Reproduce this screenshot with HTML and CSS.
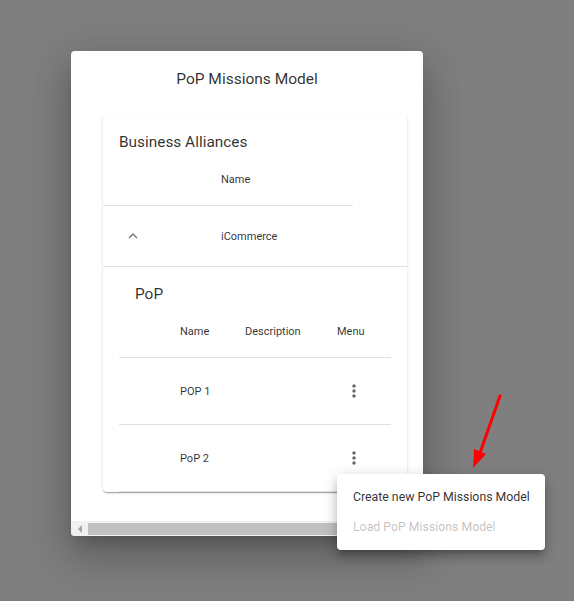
FILE: index.html
```html
<!DOCTYPE html>
<html>
<head>
<meta charset="utf-8">
<link rel="stylesheet" href="styles.css">
</head>
<body>
<div class="dialog">
  <h2 class="dialog-title">PoP Missions Model</h2>
  <div class="dialog-content">
    <div class="card">
      <div class="card-title">Business Alliances</div>
      <div class="outer-head">
        <div class="c-icon"></div>
        <div class="c-name">Name</div>
      </div>
      <div class="outer-row">
        <div class="c-icon">
          <svg class="chev" viewBox="0 0 24 24" width="18" height="18"><path d="M7.41 15.41 12 10.830l4.59 4.58L18 14l-6-6-6 6z"/></svg>
        </div>
        <div class="c-name">iCommerce</div>
      </div>
      <div class="detail">
        <div class="sub-title">PoP</div>
        <div class="sub-row sub-head">
          <div></div><div class="cell">Name</div><div class="cell">Description</div><div class="cell">Menu</div>
        </div>
        <div class="sub-row">
          <div></div><div class="cell">POP 1</div><div class="cell"></div>
          <div class="cell kebab"><svg viewBox="0 0 24 24" width="20" height="20"><path d="M12 8c1.1 0 2-.9 2-2s-.9-2-2-2-2 .9-2 2 .9 2 2 2zm0 2c-1.1 0-2 .9-2 2s.9 2 2 2 2-.9 2-2-.9-2-2-2zm0 6c-1.1 0-2 .9-2 2s.9 2 2 2 2-.9 2-2-.9-2-2-2z"/></svg></div>
        </div>
        <div class="sub-row">
          <div></div><div class="cell">PoP 2</div><div class="cell"></div>
          <div class="cell kebab"><svg viewBox="0 0 24 24" width="20" height="20"><path d="M12 8c1.1 0 2-.9 2-2s-.9-2-2-2-2 .9-2 2 .9 2 2 2zm0 2c-1.1 0-2 .9-2 2s.9 2 2 2 2-.9 2-2-.9-2-2-2zm0 6c-1.1 0-2 .9-2 2s.9 2 2 2 2-.9 2-2-.9-2-2-2z"/></svg></div>
        </div>
      </div>
    </div>
  </div>
  <div class="hscroll">
    <div class="hs-btn"><span class="hs-tri"></span></div>
    <div class="hs-thumb"></div>
  </div>
</div>

<div class="menu">
  <div class="menu-item">Create new PoP Missions Model</div>
  <div class="menu-item disabled">Load PoP Missions Model</div>
</div>

<svg class="arrow" width="40" height="90" viewBox="0 0 40 90">
  <line x1="34" y1="5" x2="14" y2="62" stroke="#ff0000" stroke-width="3" stroke-linecap="round"/>
  <polygon points="7,77 8,58 20,63" fill="#ff0000"/>
</svg>
</body>
</html>
```

FILE: styles.css
```css
html, body {
  margin: 0;
  padding: 0;
}
body {
  background: #7f7f7f;
  font-family: Roboto, "Liberation Sans", sans-serif;
  color: rgba(0, 0, 0, 0.82);
  width: 574px;
  height: 601px;
  overflow: hidden;
  position: relative;
  padding-top: 51px;
  padding-left: 71px;
  box-sizing: border-box;
}
.dialog {
  width: 352px;
  height: 485px;
  background: #fff;
  border-radius: 4px;
  box-shadow: 0 11px 15px -7px rgba(0,0,0,0.2), 0 24px 38px 3px rgba(0,0,0,0.14), 0 9px 46px 8px rgba(0,0,0,0.12);
  display: flex;
  flex-direction: column;
  overflow: hidden;
}
.dialog-title {
  margin: 0;
  padding-top: 16px;
  font-size: 15.5px;
  line-height: 24px;
  font-weight: 400;
  text-align: center;
}
.dialog-content {
  padding: 24px 16px 0 32px;
}
.card {
  width: 304px;
  background: #fff;
  border-radius: 4px;
  box-shadow: 0 2px 1px -1px rgba(0,0,0,0.2), 0 1px 1px 0 rgba(0,0,0,0.14), 0 1px 3px 0 rgba(0,0,0,0.12);
  overflow: hidden;
}
.card-title, .sub-title {
  height: 38px;
  box-sizing: border-box;
  padding-top: 17px;
  padding-left: 16px;
  font-size: 15.4px;
  line-height: 20px;
}
.outer-head, .outer-row {
  display: grid;
  grid-template-columns: 102px 1fr;
  align-items: center;
  font-size: 11px;
  border-bottom: 1px solid #e0e0e0;
  box-sizing: border-box;
}
.outer-head {
  width: 250px;
  height: 53px;
}
.outer-row {
  height: 61px;
}
.c-name {
  padding-left: 16px;
}
.c-icon {
  display: flex;
  padding-left: 21px;
  align-items: center;
}
.chev {
  fill: rgba(0,0,0,0.54);
}
.detail {
  padding: 0 16px;
}
.sub-row {
  display: grid;
  grid-template-columns: 45px 65px 92px 70px;
  align-items: center;
  height: 67px;
  box-sizing: border-box;
  border-bottom: 1px solid #e0e0e0;
  font-size: 11px;
}
.sub-row.sub-head {
  height: 53px;
}
.cell {
  padding-left: 16px;
}
.kebab {
  display: flex;
  padding-left: 23px;
}
.kebab svg {
  fill: rgba(0,0,0,0.6);
}
.hscroll {
  margin-top: auto;
  height: 15px;
  background: #f1f1f1;
  display: flex;
  align-items: center;
}
.hs-btn {
  width: 17px;
  height: 15px;
  display: flex;
  align-items: center;
  justify-content: center;
}
.hs-tri {
  width: 0;
  height: 0;
  border-top: 4px solid transparent;
  border-bottom: 4px solid transparent;
  border-right: 4px solid #a3a3a3;
}
.hs-thumb {
  flex: 1;
  height: 12px;
  background: #c1c1c1;
}
.menu {
  position: absolute;
  left: 337px;
  top: 474px;
  width: 208px;
  padding: 8px 0;
  background: #fff;
  border-radius: 4px;
  box-shadow: 0 5px 5px -3px rgba(0,0,0,0.2), 0 8px 10px 1px rgba(0,0,0,0.14), 0 3px 14px 2px rgba(0,0,0,0.12);
}
.menu-item {
  height: 30px;
  line-height: 30px;
  padding-left: 16px;
  font-size: 12.3px;
  color: rgba(0,0,0,0.82);
}
.menu-item.disabled {
  color: rgba(0,0,0,0.26);
}
.arrow {
  position: absolute;
  left: 466px;
  top: 391px;
}
```
